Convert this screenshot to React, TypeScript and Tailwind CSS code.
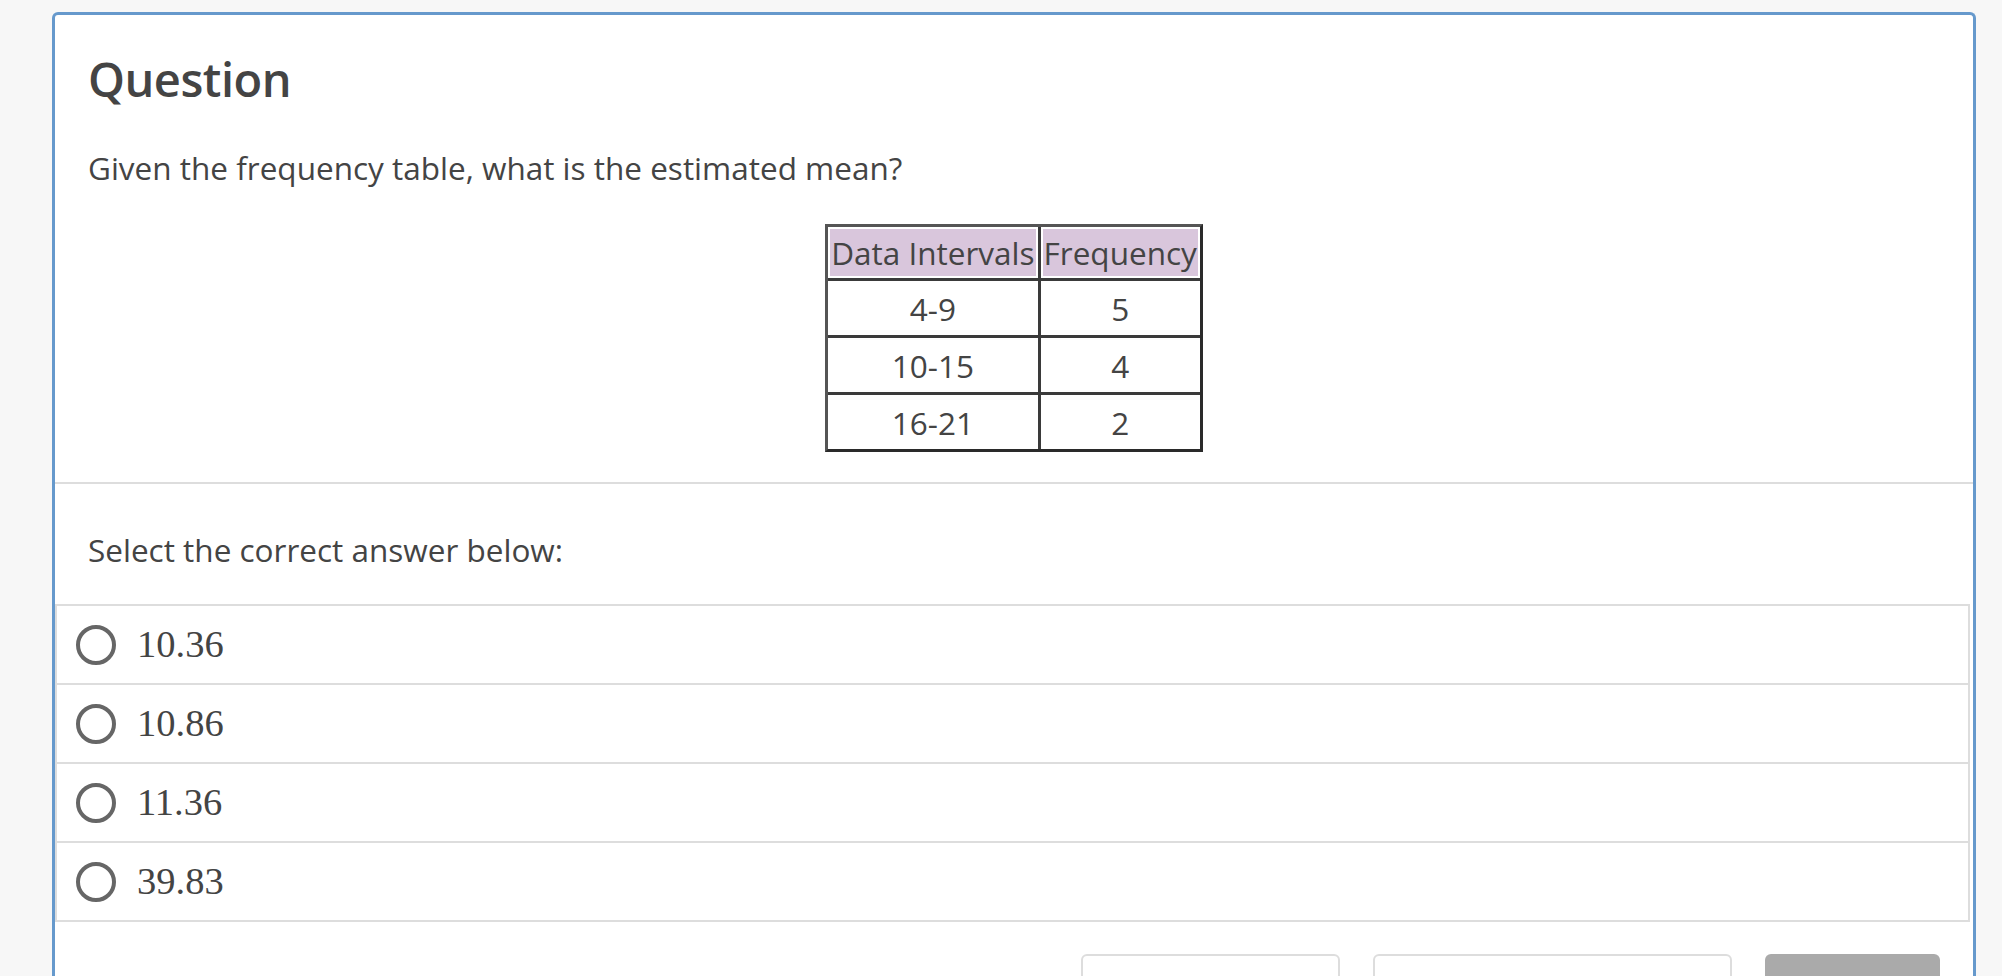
import React from "react";

const options = ["10.36", "10.86", "11.36", "39.83"];
const rows: [string, string][] = [
  ["4-9", "5"],
  ["10-15", "4"],
  ["16-21", "2"],
];

export default function App() {
  return (
    <div
      className="min-h-[976px] w-full overflow-hidden bg-[#f7f7f7] pt-[12px] text-[#444444]"
      style={{ fontFamily: '"Open Sans", "Noto Sans", sans-serif' }}
    >
      <div className="ml-[52px] w-[1924px] min-h-[980px] rounded-t-[6px] border-[3px] border-b-0 border-[#6699cc] bg-white">
        <div className="px-[33px] pt-[36px] pb-[30px]">
          <h1 className="text-[47px] leading-[56px] font-semibold tracking-[-0.5px] text-[#444444]">Question</h1>
          <p className="mt-[37px] text-[31.5px] leading-[47px]">
            Given the frequency table, what is the estimated mean?
          </p>
          <div className="mt-[33px] flex justify-center">
            <table className="border-separate border-spacing-0 border-[3px] border-t-[#555555] border-l-[#555555] border-r-[#2a2a2a] border-b-[#2a2a2a] text-[31.5px] leading-[47px]">
              <thead>
                <tr>
                  <th className="border-r-[3px] border-b-[3px] border-[#3a3a3a] p-[2px] font-normal">
                    <div className="bg-[#d9c6dc] px-[1px]">Data Intervals</div>
                  </th>
                  <th className="border-b-[3px] border-[#3a3a3a] p-[2px] font-normal">
                    <div className="bg-[#d9c6dc] px-[1px]">Frequency</div>
                  </th>
                </tr>
              </thead>
              <tbody>
                {rows.map(([a, b], i) => (
                  <tr key={a}>
                    <td
                      className={`border-r-[3px] border-[#3a3a3a] px-[3px] pt-[4px] pb-[3px] text-center ${
                        i < rows.length - 1 ? "border-b-[3px]" : ""
                      }`}
                    >
                      {a}
                    </td>
                    <td
                      className={`border-[#3a3a3a] px-[3px] pt-[4px] pb-[3px] text-center ${
                        i < rows.length - 1 ? "border-b-[3px]" : ""
                      }`}
                    >
                      {b}
                    </td>
                  </tr>
                ))}
              </tbody>
            </table>
          </div>
        </div>
        <div className="border-t-2 border-[#dddddd]" />
        <div className="px-[33px] pt-[42px]">
          <p className="text-[31.5px] leading-[47px]">Select the correct answer below:</p>
        </div>
        <div className="mt-[31px] mr-[3px] border-2 border-[#dddddd]">
          {options.map((o, i) => (
            <div
              key={o}
              className={`box-content flex h-[77px] items-center pl-[19px] ${
                i > 0 ? "border-t-2 border-[#dddddd]" : ""
              }`}
            >
              <span className="block h-[40px] w-[40px] rounded-full border-[4px] border-[#666666]" />
              <span
                className="ml-[21px] text-[38.5px] leading-none text-[#444444]"
                style={{ fontFamily: '"Liberation Serif", "Times New Roman", serif' }}
              >
                {o}
              </span>
            </div>
          ))}
        </div>
        <div className="mt-[32px] flex justify-end gap-[33px] pr-[33px]">
          <div className="h-[60px] w-[259px] rounded-[6px] border-2 border-[#dddddd] bg-white" />
          <div className="h-[60px] w-[359px] rounded-[6px] border-2 border-[#dddddd] bg-white" />
          <div className="h-[60px] w-[175px] rounded-[6px] bg-[#aaaaaa]" />
        </div>
      </div>
    </div>
  );
}
